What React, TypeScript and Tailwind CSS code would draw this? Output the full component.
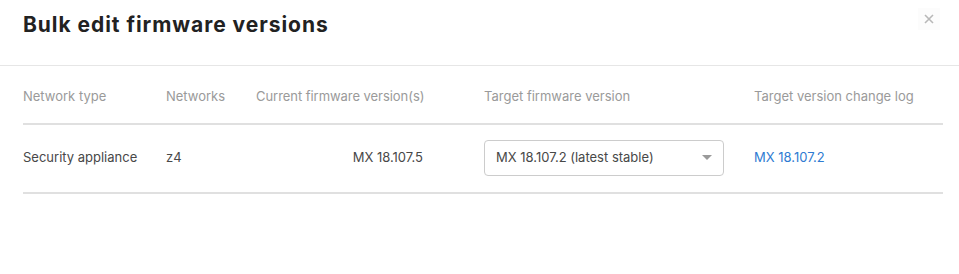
const headers = [
  "Network type",
  "Networks",
  "Current firmware version(s)",
  "Target firmware version",
  "Target version change log",
];

const App = () => {
  return (
    <div className="w-[959px] h-[274px] bg-white font-['Inter',sans-serif] text-[13px]">
      {/* Header */}
      <div className="h-[66px] flex items-start justify-between pl-[23px] pr-[19px] border-b border-[#e6e6e6]">
        <h2 className="mt-[9px] text-[21px] font-bold tracking-[0.95px] text-[#222222] font-['Inter',sans-serif]">
          Bulk edit firmware versions
        </h2>
        <button className="mt-[8px] w-[22px] h-[22px] flex items-center justify-center bg-[#fcfcfc] text-[#b8b8b8]">
          <svg width="10" height="10" viewBox="0 0 10 10">
            <path d="M1 1L9 9M9 1L1 9" stroke="currentColor" strokeWidth="1.6" />
          </svg>
        </button>
      </div>

      {/* Table */}
      <div className="mx-[23px] w-[920px] whitespace-nowrap">
        <div className="grid grid-cols-[143px_90px_228px_270px_1fr] h-[59px] pt-[5px] items-center border-b-2 border-[#e0e0e0] text-[#9a9a9a]">
          <div>{headers[0]}</div>
          <div>{headers[1]}</div>
          <div className="text-right pr-[61px] tracking-[-0.05px]">{headers[2]}</div>
          <div>{headers[3]}</div>
          <div>{headers[4]}</div>
        </div>
        <div className="grid grid-cols-[143px_90px_228px_270px_1fr] h-[69px] pb-[2px] items-center border-b-2 border-[#e0e0e0] text-[#484848]">
          <div>Security appliance</div>
          <div>z4</div>
          <div className="text-right pr-[61px]">MX 18.107.5</div>
          <div>
            <div className="w-[240px] h-[36px] border border-[#cccccc] rounded-[4px] flex items-center justify-between pl-[11px] pr-[11px]">
              <span>MX 18.107.2 (latest stable)</span>
              <svg width="10" height="6" viewBox="0 0 10 6">
                <path d="M0 0H10L5 5Z" fill="#9a9a9a" />
              </svg>
            </div>
          </div>
          <div>
            <a href="#" className="text-[#2f7bd2]">MX 18.107.2</a>
          </div>
        </div>
      </div>
    </div>
  );
};

export default App;
